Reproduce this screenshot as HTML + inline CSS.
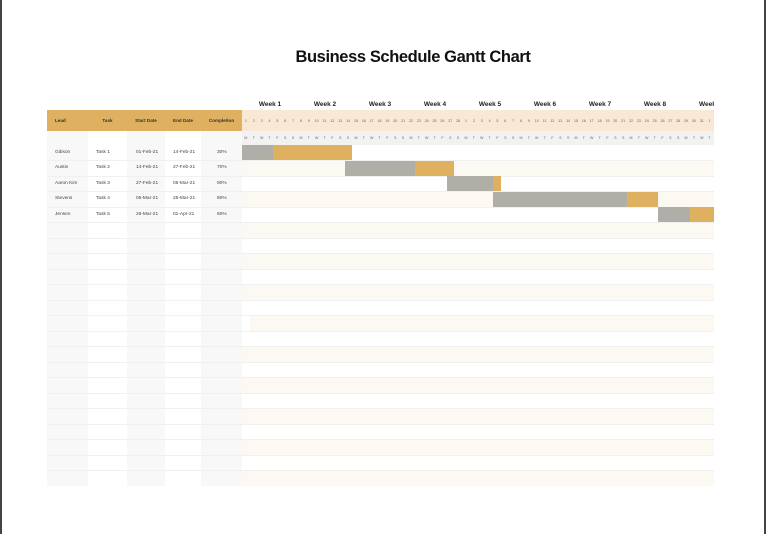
<!DOCTYPE html>
<html><head><meta charset="utf-8"><style>
*{margin:0;padding:0;box-sizing:border-box}
body{width:768px;height:534px;background:#fff;position:relative;overflow:hidden;font-family:"Liberation Sans",sans-serif;color:#333}
.bl{position:absolute;left:0;top:0;width:2px;height:534px;background:#444}
.br{position:absolute;left:764px;top:0;width:2px;height:534px;background:#444}
h1{position:absolute;left:242px;width:342px;top:48px;text-align:center;font-size:16.5px;font-weight:bold;color:#111;letter-spacing:-0.4px}
.wk{position:absolute;top:101px;font-size:6.5px;font-weight:bold;color:#222;width:40px;text-align:center;white-space:nowrap}
.hd{position:absolute;top:110px;height:21px;background:#dfb060;font-size:4.6px;font-weight:bold;color:#333;display:flex;align-items:center}
.hd div{text-align:center}
.days{position:absolute;left:242px;width:472px;display:flex;font-size:3.6px;color:#666}
.days span{flex:1;text-align:center}
.col{position:absolute;top:145px;height:341px}
.row{position:absolute;left:47px;width:667px;height:1px;background:#f0f0f0}
.g{position:absolute;left:242px;width:472px;height:15.5px;background:#fcf8f2}
.t{position:absolute;font-size:4.8px;color:#444}
.bar{position:absolute;height:15px}
.gr{background:#b0afa7}.go{background:#dfb060}
</style></head><body>
<div class="bl"></div><div class="br"></div>
<h1>Business Schedule Gantt Chart</h1>
<div class="wk" style="left:250px">Week 1</div>
<div class="wk" style="left:305px">Week 2</div>
<div class="wk" style="left:360px">Week 3</div>
<div class="wk" style="left:415px">Week 4</div>
<div class="wk" style="left:470px">Week 5</div>
<div class="wk" style="left:525px">Week 6</div>
<div class="wk" style="left:580px">Week 7</div>
<div class="wk" style="left:635px">Week 8</div>
<div class="wk" style="left:699px;width:15px;overflow:hidden;text-align:left">Week 9</div>
<div class="hd" style="left:47px;width:195px">
<div style="width:41px;text-align:left;padding-left:8px">Lead</div><div style="width:39px">Task</div><div style="width:38px">Start Date</div><div style="width:36px">End Date</div><div style="width:41px">Completion</div></div>
<div class="days" style="top:110px;height:21px;background:#f8e8d4;align-items:center">
<span>1</span><span>2</span><span>3</span><span>4</span><span>5</span><span>6</span><span>7</span><span>8</span><span>9</span><span>10</span><span>11</span><span>12</span><span>13</span><span>14</span><span>15</span><span>16</span><span>17</span><span>18</span><span>19</span><span>20</span><span>21</span><span>22</span><span>23</span><span>24</span><span>25</span><span>26</span><span>27</span><span>28</span><span>1</span><span>2</span><span>3</span><span>4</span><span>5</span><span>6</span><span>7</span><span>8</span><span>9</span><span>10</span><span>11</span><span>12</span><span>13</span><span>14</span><span>15</span><span>16</span><span>17</span><span>18</span><span>19</span><span>20</span><span>21</span><span>22</span><span>23</span><span>24</span><span>25</span><span>26</span><span>27</span><span>28</span><span>29</span><span>30</span><span>31</span><span>1</span></div>
<div class="days" style="top:131px;height:14px;background:#f2f2f2;align-items:center">
<span>M</span><span>T</span><span>W</span><span>T</span><span>F</span><span>S</span><span>S</span><span>M</span><span>T</span><span>W</span><span>T</span><span>F</span><span>S</span><span>S</span><span>M</span><span>T</span><span>W</span><span>T</span><span>F</span><span>S</span><span>S</span><span>M</span><span>T</span><span>W</span><span>T</span><span>F</span><span>S</span><span>S</span><span>M</span><span>T</span><span>W</span><span>T</span><span>F</span><span>S</span><span>S</span><span>M</span><span>T</span><span>W</span><span>T</span><span>F</span><span>S</span><span>S</span><span>M</span><span>T</span><span>W</span><span>T</span><span>F</span><span>S</span><span>S</span><span>M</span><span>T</span><span>W</span><span>T</span><span>F</span><span>S</span><span>S</span><span>M</span><span>T</span><span>W</span><span>T</span></div>
<div class="col" style="left:47px;width:41px;top:131px;height:355px;background:#f8f8f8"></div>
<div class="col" style="left:127px;width:38px;top:131px;height:355px;background:#f8f8f8"></div>
<div class="col" style="left:201px;width:41px;top:131px;height:355px;background:#f8f8f8"></div>
<div class="g" style="top:160.5px"></div><div class="g" style="top:191.5px"></div><div class="g" style="top:222.5px"></div><div class="g" style="top:253.5px"></div><div class="g" style="top:284.5px"></div><div class="g" style="top:315.5px;left:250px;width:464px"></div><div class="g" style="top:346.5px"></div><div class="g" style="top:377.5px"></div><div class="g" style="top:408.5px"></div><div class="g" style="top:439.5px"></div><div class="g" style="top:470.5px"></div>
<div class="row" style="top:160px"></div><div class="row" style="top:176px"></div><div class="row" style="top:191px"></div><div class="row" style="top:207px"></div><div class="row" style="top:222px"></div><div class="row" style="top:238px"></div><div class="row" style="top:253px"></div><div class="row" style="top:269px"></div><div class="row" style="top:284px"></div><div class="row" style="top:300px"></div><div class="row" style="top:315px"></div><div class="row" style="top:331px"></div><div class="row" style="top:346px"></div><div class="row" style="top:362px"></div><div class="row" style="top:377px"></div><div class="row" style="top:393px"></div><div class="row" style="top:408px"></div><div class="row" style="top:424px"></div><div class="row" style="top:439px"></div><div class="row" style="top:455px"></div><div class="row" style="top:470px"></div>
<div class="t" style="left:55px;top:150px">Gibson</div><div class="t" style="left:96px;top:150px">Task 1</div><div class="t" style="left:136px;top:150px">01-Feb-21</div><div class="t" style="left:173px;top:150px">14-Feb-21</div><div class="t" style="left:217px;top:150px">30%</div>
<div class="t" style="left:55px;top:165px">Austin</div><div class="t" style="left:96px;top:165px">Task 2</div><div class="t" style="left:136px;top:165px">14-Feb-21</div><div class="t" style="left:173px;top:165px">27-Feb-21</div><div class="t" style="left:217px;top:165px">70%</div>
<div class="t" style="left:55px;top:181px">Aaron Kim</div><div class="t" style="left:96px;top:181px">Task 3</div><div class="t" style="left:136px;top:181px">27-Feb-21</div><div class="t" style="left:173px;top:181px">05-Mar-21</div><div class="t" style="left:217px;top:181px">90%</div>
<div class="t" style="left:55px;top:196px">Stevens</div><div class="t" style="left:96px;top:196px">Task 4</div><div class="t" style="left:136px;top:196px">05-Mar-21</div><div class="t" style="left:173px;top:196px">25-Mar-21</div><div class="t" style="left:217px;top:196px">80%</div>
<div class="t" style="left:55px;top:212px">Jensen</div><div class="t" style="left:96px;top:212px">Task 5</div><div class="t" style="left:136px;top:212px">26-Mar-21</div><div class="t" style="left:173px;top:212px">01-Apr-21</div><div class="t" style="left:217px;top:212px">60%</div>
<div class="bar gr" style="left:242px;top:145px;width:31px"></div><div class="bar go" style="left:273px;top:145px;width:79px"></div>
<div class="bar gr" style="left:345px;top:160.5px;width:70px"></div><div class="bar go" style="left:415px;top:160.5px;width:39px"></div>
<div class="bar gr" style="left:447px;top:176px;width:46px"></div><div class="bar go" style="left:493px;top:176px;width:8px"></div>
<div class="bar gr" style="left:493px;top:191.5px;width:134px"></div><div class="bar go" style="left:627px;top:191.5px;width:31px"></div>
<div class="bar gr" style="left:658px;top:207px;width:32px"></div><div class="bar go" style="left:690px;top:207px;width:24px"></div>
</body></html>
